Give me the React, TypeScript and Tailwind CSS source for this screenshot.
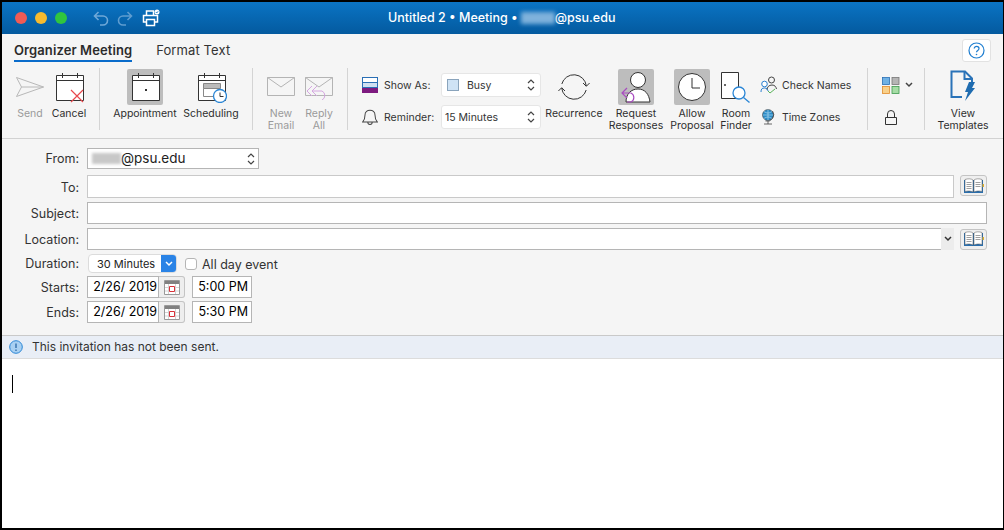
import type { ReactNode } from 'react'

const font = 'font-["Inter","Liberation_Sans",sans-serif]'

function Sep({ className }: { className: string }) {
  return <div className={`h-[62px] w-px shrink-0 bg-[#d4d4d4] ${className}`} />
}

function RibbonItem({ icon, lines, width, dim, active }: { icon: ReactNode; lines: string[]; width: string; dim?: boolean; active?: boolean }) {
  return (
    <div className={`flex shrink-0 flex-col items-center pt-px ${width}`}>
      <div className={`flex h-9 w-9 items-center justify-center rounded-[2px] ${active ? 'bg-[#bdbdbd]' : ''}`}>{icon}</div>
      <div className={`mt-[3px] whitespace-nowrap text-center text-[10.5px] leading-[12px] ${dim ? 'text-[#9a9a9a]' : 'text-[#2e2e2e]'}`}>
        {lines.map((l) => (
          <div key={l}>{l}</div>
        ))}
      </div>
    </div>
  )
}

function Updown() {
  return (
    <svg width="8" height="14" viewBox="0 0 8 14" fill="none" stroke="#444" strokeWidth="1.2">
      <path d="M1 5l3-3 3 3M1 9l3 3 3-3" />
    </svg>
  )
}

function RibbonSelect({ children }: { children: ReactNode }) {
  return (
    <div className="flex h-6 w-[100px] items-center justify-between rounded-[3px] border border-[#e6e6e6] bg-white pr-[5px] text-[10.5px] text-[#333]">
      {children}
      <Updown />
    </div>
  )
}

function CalendarBase({ children }: { children?: ReactNode }) {
  return (
    <svg width="32" height="32" viewBox="0 0 32 32" fill="none" stroke="#333" strokeWidth="1">
      <path d="M3.5 4.5h27v25h-27zM3.5 9.5h27M9.5 2v5M24.5 2v5" fill="#fff" />
      {children}
    </svg>
  )
}

function Envelope({ children }: { children?: ReactNode }) {
  return (
    <svg width="32" height="26" viewBox="0 0 32 26" fill="none" stroke="#b4b4b4" strokeWidth="1">
      <path d="M2.5 3.5h27v18h-27zM2.5 3.5L16 13 29.5 3.5" />
      {children}
    </svg>
  )
}

function BookButton() {
  return (
    <div className="flex h-[21px] w-[27px] items-center justify-center rounded-[3px] border border-[#c4c4c4] bg-[#efefef]">
      <svg width="21" height="16" viewBox="0 0 21 16" fill="none">
        <path d="M1 2h19v13H1z" fill="#2a6fae" />
        <path d="M2 1.500c3-1 6-1 8 .5v12c-2-1-5-1.500-8-.5zM11 2c2-1.500 5-1.500 8-.5v12c-3-1-6-.5-8 .5z" fill="#fff" stroke="#555" strokeWidth=".5" />
        <path d="M3.500 4.500h5M3.500 6.500h5M3.500 8.500h5M3.500 10.500h5M12.500 4.500h5M12.500 6.500h5M12.500 8.500h5" stroke="#777" strokeWidth=".7" />
        <path d="M19.500 6h1.500v3h-1.500z" fill="#e0b030" />
      </svg>
    </div>
  )
}

function FormLabel({ children }: { children: ReactNode }) {
  return <div className="w-[77px] shrink-0 pt-[2px] text-right text-[12.5px] text-[#333]">{children}</div>
}

function DateTimeRow({ label, time }: { label: string; time: string }) {
  return (
    <div className="flex h-[22px] items-center">
      <FormLabel>{label}</FormLabel>
      <div className="ml-2 flex h-[22px] w-[72px] items-center justify-end border border-[#b5b5b5] bg-white pr-px text-[12.5px] text-black">2/26/ 2019</div>
      <div className="flex h-[22px] w-[26px] items-center justify-center rounded-r-[3px] border border-l-0 border-[#c4c4c4] bg-[#eeeeee]">
        <svg width="16" height="15" viewBox="0 0 16 15" fill="none">
          <path d="M.5.500h15v14H.5z" fill="#fff" stroke="#999" />
          <path d="M1 1h14v3H1z" fill="#808080" />
          <path d="M1 7.500h14M1 11h14M4.500 4v10M11.500 4v10" stroke="#d4d4d4" />
          <path d="M5.500 6.500h5v5h-5z" fill="#fff" stroke="#d8323a" />
        </svg>
      </div>
      <div className="ml-[7px] flex h-[22px] w-[60px] items-center justify-end border border-[#b5b5b5] bg-white pr-[3px] text-[12.5px] text-black">{time}</div>
    </div>
  )
}

export default function App() {
  return (
    <div className={`flex h-[530px] w-[1004px] flex-col overflow-hidden border-2 border-r-[1px] border-black bg-white ${font}`}>
      <header className="relative flex h-[32px] shrink-0 items-center bg-gradient-to-b from-[#0b74c4] to-[#045a9f]">
        <div className="ml-[13px] flex gap-[8px]">
          <div className="h-3 w-3 rounded-full bg-[#f15b55]" />
          <div className="h-3 w-3 rounded-full bg-[#f7bb2f]" />
          <div className="h-3 w-3 rounded-full bg-[#30c53f]" />
        </div>
        <svg className="ml-[26px]" width="16" height="15" viewBox="0 0 16 15" fill="none" stroke="#6fa8d8" strokeWidth="1.600">
          <path d="M5.500 1L1.500 5l4 4M1.500 5H10a4.500 4.500 0 010 9H7" />
        </svg>
        <svg className="ml-[8px]" width="16" height="15" viewBox="0 0 16 15" fill="none" stroke="#5f9dd0" strokeWidth="1.600">
          <path d="M10.500 1l4 4-4 4M14.500 5H6a4.500 4.500 0 000 9h3" />
        </svg>
        <svg className="ml-[9px]" width="19" height="19" viewBox="0 0 19 19" fill="none" stroke="#fff" strokeWidth="1.500">
          <path d="M4.500 6V2h7v4M4.500 13H1.500V6.500h14V13h-3M4.500 10.500h8v6h-8z" />
          <circle cx="15" cy="3" r="2.500" fill="#fff" stroke="none" />
          <path d="M13.800 3l1 1 1.400-1.800" stroke="#0b74c4" strokeWidth=".8" />
        </svg>
        <div className="absolute left-[386px] top-0 flex h-[32px] items-center whitespace-nowrap text-[12.5px] font-medium text-white">
          Untitled 2 • Meeting •
          <span className="ml-[3px] h-[12px] w-[34px] bg-[#7fb2dc] blur-[2px]" />
          @psu.edu
        </div>
      </header>

      <div className="flex h-[105px] shrink-0 flex-col border-b border-[#d2d2d2] bg-[#f5f5f5]">
        <div className="flex h-[34px] shrink-0 items-start justify-between">
          <div className="flex pl-[12px] pt-[8px] text-[13px] tracking-[0.1px] text-[#333]">
            <div className="border-b-2 border-[#0a6ccb] pb-[2px] font-semibold leading-[16px] text-[#2b2b2b]">Organizer Meeting</div>
            <div className="ml-[24px] leading-[16px]">Format Text</div>
          </div>
          <div className="mr-[12px] mt-[5px] flex h-[23px] w-[29px] items-center justify-center rounded-[3px] border border-[#e2e2e2] bg-white">
            <svg width="17" height="17" viewBox="0 0 17 17" fill="none">
              <circle cx="8.500" cy="8.500" r="7.500" stroke="#1f7ed0" strokeWidth="1.200" />
              <path d="M6.200 6.600c0-3 4.800-3 4.800 0 0 1.800-2.500 1.800-2.500 3.600" stroke="#1f7ed0" strokeWidth="1.200" />
              <circle cx="8.500" cy="12.500" r=".8" fill="#1f7ed0" />
            </svg>
          </div>
        </div>

        <div className="flex items-start">
          <RibbonItem
            width="ml-[8px] w-[40px]"
            dim
            lines={['Send']}
            icon={
              <svg width="30" height="22" viewBox="0 0 30 22" fill="none" stroke="#b8b8b8">
                <path d="M1.500 1.500L28.500 11 1.500 20.500 6.500 11zM6.500 11h22" />
              </svg>
            }
          />
          <RibbonItem
            width="w-[38px]"
            lines={['Cancel']}
            icon={
              <CalendarBase>
                <path d="M18 31l12-12M18 19l12 12" stroke="#e8474c" strokeWidth="1.200" />
              </CalendarBase>
            }
          />
          <Sep className="ml-[11px]" />
          <RibbonItem width="ml-[10px] w-[70px]" active lines={['Appointment']} icon={<CalendarBase><rect x="16" y="18" width="2" height="2" fill="#333" stroke="none" /></CalendarBase>} />
          <RibbonItem
            width="w-[62px]"
            lines={['Scheduling']}
            icon={
              <CalendarBase>
                <path d="M8.500 12.500h17v5h-17z" fill="#bbb" stroke="#888" />
                <path d="M8.500 17.500v8h12" stroke="#888" />
                <circle cx="25" cy="25" r="6.500" fill="#fff" stroke="#2a86d6" strokeWidth="1.300" />
                <path d="M25 21.500V25.500h3.500" stroke="#333" />
              </CalendarBase>
            }
          />
          <Sep className="ml-[10px]" />
          <RibbonItem width="ml-[9px] w-[38px]" dim lines={['New', 'Email']} icon={<Envelope />} />
          <RibbonItem
            width="w-[38px]"
            dim
            lines={['Reply', 'All']}
            icon={
              <Envelope>
                <path d="M9 12l-5 5 5 5M14 12l-5 5 5 5M9 17h10a5 5 0 010 9" stroke="#d4a6e0" />
              </Envelope>
            }
          />
          <Sep className="ml-[9px]" />

          <div className="ml-[14px] mt-[5px] flex w-[180px] shrink-0 flex-col gap-2 text-[10.5px] text-[#333]">
            <div className="flex h-6 items-center">
              <svg width="16" height="16" viewBox="0 0 16 16">
                <path d="M0 0h16v16H0z" fill="#2a6fb5" />
                <path d="M1 1h14v4H1z" fill="#fff" />
                <path d="M1 6h14v4H1z" fill="#cfe0f2" />
                <path d="M0 11h16v5H0z" fill="#7d1a7f" />
              </svg>
              <span className="ml-[6px] w-[57px] pt-[2px]">Show As:</span>
              <RibbonSelect>
                <div className="flex items-center">
                  <span className="ml-[5px] h-[12px] w-[12px] border border-[#8aa4bc] bg-[#cfe3f5]" />
                  <span className="ml-[8px] pt-[2px]">Busy</span>
                </div>
              </RibbonSelect>
            </div>
            <div className="flex h-6 items-center">
              <svg width="16" height="19" viewBox="1 2 14 17" fill="none" stroke="#444" strokeWidth=".9">
                <path d="M1.500 14.500c2-2 2-3 2-6 0-6 9-6 9 0 0 3 0 4 2 6zM6 14.500c0 3 4 3 4 0" />
              </svg>
              <span className="ml-[6px] w-[57px] pt-[2px]">Reminder:</span>
              <RibbonSelect>
                <span className="ml-[3px] pt-[2px]">15 Minutes</span>
              </RibbonSelect>
            </div>
          </div>

          <RibbonItem
            width="w-[64px]"
            lines={['Recurrence']}
            icon={
              <svg width="34" height="28" viewBox="0 0 34 28" fill="none" stroke="#333">
                <path d="M4.800 11A12.500 12.500 0 0129.300 13M29.200 17A12.500 12.500 0 014.700 15" />
                <path d="M26 10l3.300 3.300L32.600 10M1.400 18l3.300-3.300L8 18" />
              </svg>
            }
          />
          <RibbonItem
            width="w-[60px]"
            active
            lines={['Request', 'Responses']}
            icon={
              <svg width="34" height="34" viewBox="0 0 34 34" fill="none">
                <circle cx="19" cy="10" r="7.500" fill="#fff" stroke="#333" />
                <path d="M7 32c0-8 5-13 12-13s11 5 12 13z" fill="#fff" stroke="#333" />
                <path d="M8 18l-5 5 5 5M3 23h9a5 5 0 010 9H8" stroke="#a94cc0" strokeWidth="1.200" />
              </svg>
            }
          />
          <RibbonItem
            width="w-[52px]"
            active
            lines={['Allow', 'Proposal']}
            icon={
              <svg width="30" height="30" viewBox="0 0 30 30" fill="none" stroke="#333">
                <circle cx="15" cy="15" r="13.500" fill="#fff" />
                <path d="M15 6v10h8" />
              </svg>
            }
          />
          <RibbonItem
            width="w-[36px]"
            lines={['Room', 'Finder']}
            icon={
              <svg width="32" height="32" viewBox="0 0 32 32" fill="none">
                <path d="M1.500 1.500h17v26h-17z" fill="#fff" stroke="#333" />
                <circle cx="5" cy="14" r="1" fill="#333" />
                <circle cx="19" cy="22" r="6" fill="#fff" stroke="#2a86d6" strokeWidth="1.300" />
                <path d="M23.500 26.500l6 5" stroke="#2a86d6" strokeWidth="1.300" />
              </svg>
            }
          />

          <div className="ml-[6px] mt-[5px] flex w-[107px] shrink-0 flex-col gap-2 text-[10.5px] text-[#333]">
            <div className="flex h-6 items-center">
              <svg width="17" height="18" viewBox="0 0 17 18" fill="none">
                <circle cx="11.500" cy="4" r="3" stroke="#444" />
                <path d="M7 14c0-3 2-5 5-5s4 2 4.500 4" stroke="#444" />
                <circle cx="4.500" cy="8" r="2.800" fill="#fff" stroke="#2a7fd0" />
                <path d="M1 16c0-3 1-4 3.500-4s3 1 3.500 3" stroke="#2a7fd0" />
                <path d="M8 15l2 2 5-4" stroke="#5ab45a" />
              </svg>
              <span className="ml-[5px] pt-[2px]">Check Names</span>
            </div>
            <div className="flex h-6 items-center">
              <svg width="17" height="18" viewBox="0 0 17 18" fill="none">
                <circle cx="8" cy="7" r="5.500" fill="#2a8cc8" stroke="#444" strokeWidth=".6" />
                <path d="M3 7h10M8 1.500v11M4 3.500c3 2 5 2 8 0M4 10.500c3-2 5-2 8 0" stroke="#bfe0f2" strokeWidth=".6" />
                <path d="M4 16h8M8 13v3M12.500 3a6.500 6.500 0 01-7 10" stroke="#444" strokeWidth=".8" />
              </svg>
              <span className="ml-[5px] pt-[2px]">Time Zones</span>
            </div>
          </div>

          <Sep className="ml-0" />
          <div className="ml-[14px] mt-[5px] flex w-[31px] shrink-0 flex-col gap-2">
            <div className="flex h-6 items-center">
              <svg width="18" height="17" viewBox="0 0 18 17" fill="none" strokeWidth=".8">
                <rect x=".5" y=".5" width="7" height="7" fill="#6fb1e4" stroke="#2a6fb5" />
                <rect x="10" y=".5" width="7" height="7" fill="#b5b5b5" stroke="#777" />
                <rect x=".5" y="9.500" width="7" height="7" fill="#f8d08a" stroke="#e08a2a" />
                <rect x="10" y="9.500" width="7" height="7" fill="#a5dca5" stroke="#3f9a4f" />
              </svg>
              <svg className="ml-[5px]" width="8" height="6" viewBox="0 0 8 6" fill="none" stroke="#444" strokeWidth="1.500">
                <path d="M1 1l3 3 3-3" />
              </svg>
            </div>
            <div className="flex h-6 items-center pl-[1px]">
              <svg className="ml-[1px]" width="14" height="17" viewBox="0 0 14 17" fill="none" stroke="#333">
                <path d="M1.500 8.500h11v7h-11zM3.500 8.500V5a3.500 3.500 0 017 0v3.500" />
              </svg>
            </div>
          </div>
          <Sep className="ml-[11px]" />
          <RibbonItem
            width="ml-[6px] w-[64px]"
            lines={['View', 'Templates']}
            icon={
              <svg width="26" height="34" viewBox="0 0 26 34" fill="none">
                <path d="M12 27H1.500V1.500H15L22 8.500V14" stroke="#2a73b8" strokeWidth="2" />
                <path d="M14.500 1.500V9H22" stroke="#2a73b8" strokeWidth="2" />
                <path d="M19 12h6l-3 6h3L15 31l3-9h-3z" fill="#1f6cb0" />
              </svg>
            }
          />
        </div>
      </div>

      <div className="flex h-[197px] shrink-0 flex-col border-b border-[#c9c9c9] bg-[#f5f5f5] pt-[9px]">
        <div className="flex h-[21px] items-center">
          <FormLabel>From:</FormLabel>
          <div className="ml-2 flex h-[21px] w-[172px] items-center justify-between border border-[#b5b5b5] bg-white pl-[4px] pr-[3px] text-[13.5px] text-[#222]">
            <div className="flex items-center">
              <span className="h-[11px] w-[29px] bg-[#c8c8c8] blur-[1.500px]" />
              <span>@psu.edu</span>
            </div>
            <Updown />
          </div>
        </div>
        <div className="mt-[6px] flex h-[23px] items-start">
          <FormLabel><span className="leading-[21px]">To:</span></FormLabel>
          <div className="ml-2 h-[23px] w-[867px] border border-[#c9c9c9] bg-white" />
          <div className="ml-[6px]"><BookButton /></div>
        </div>
        <div className="mt-[4px] flex h-[22px] items-center">
          <FormLabel>Subject:</FormLabel>
          <div className="ml-2 h-[22px] w-[900px] border border-[#b5b5b5] bg-white" />
        </div>
        <div className="mt-[4px] flex h-[22px] items-center">
          <FormLabel>Location:</FormLabel>
          <div className="ml-2 h-[22px] w-[854px] border border-[#b5b5b5] border-r-0 bg-white" />
          <div className="flex h-[22px] w-[13px] items-center justify-center bg-[#ececec]">
            <svg width="8" height="6" viewBox="0 0 8 6" fill="none" stroke="#333" strokeWidth="1.500">
              <path d="M1 1l3 3 3-3" />
            </svg>
          </div>
          <div className="ml-[6px]"><BookButton /></div>
        </div>
        <div className="mt-[4px] flex h-[19px] items-center">
          <FormLabel>Duration:</FormLabel>
          <div className="ml-[9px] flex h-[19px] w-[89px] items-center justify-between overflow-hidden rounded-[4px] border border-[#dcdcdc] bg-white pl-[8px] text-[11px] text-[#222]">
            <span className="pt-[2px]">30 Minutes</span>
            <div className="flex h-[19px] w-[15px] items-center justify-center bg-[#2a83e6]">
              <svg width="8" height="6" viewBox="0 0 8 6" fill="none" stroke="#fff" strokeWidth="1.500">
                <path d="M1 1l3 3 3-3" />
              </svg>
            </div>
          </div>
          <div className="ml-2 h-[12px] w-[12px] rounded-[3px] border border-[#b5b5b5] bg-white" />
          <span className="ml-[5px] pt-[3px] text-[12.5px] text-[#333]">All day event</span>
        </div>
        <div className="mt-[3px]"><DateTimeRow label="Starts:" time="5:00 PM" /></div>
        <div className="mt-[3px]"><DateTimeRow label="Ends:" time="5:30 PM" /></div>
      </div>

      <div className="flex h-[23px] shrink-0 items-center border-b border-[#dcdcdc] bg-[#e9eef6] pl-[7px] text-[12px] text-[#333]">
        <svg width="14" height="14" viewBox="0 0 14 14" fill="none">
          <circle cx="7" cy="7" r="6.300" fill="#a8d0f2" stroke="#2a86d6" />
          <path d="M7 3.500v4.500M7 9.500v1.500" stroke="#1f5f9f" strokeWidth="1.200" />
        </svg>
        <span className="ml-[9px]">This invitation has not been sent.</span>
      </div>

      <div className="flex-1 bg-white pl-[10px] pt-[16px]">
        <div className="h-[18px] w-px bg-black" />
      </div>
    </div>
  )
}
